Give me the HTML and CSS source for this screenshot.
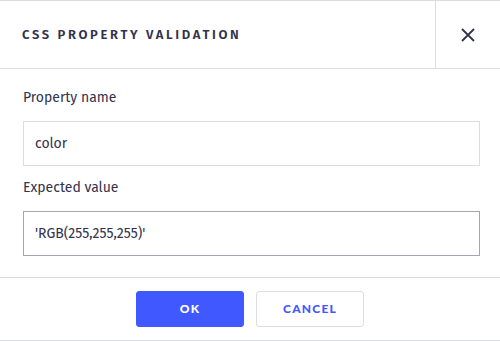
FILE: index.html
```html
<!DOCTYPE html>
<html>
<head>
<meta charset="utf-8">
<link rel="stylesheet" href="styles.css">
</head>
<body>
<div class="dialog">
  <div class="header">
    <div class="title">CSS PROPERTY VALIDATION</div>
    <button class="close" aria-label="Close">
      <svg width="16" height="16" viewBox="0 0 16 16"><path d="M2 2 L14 14 M14 2 L2 14" stroke="#32324d" stroke-width="1.8" fill="none"/></svg>
    </button>
  </div>
  <div class="body">
    <label class="label">Property name</label>
    <div class="input">color</div>
    <label class="label second">Expected value</label>
    <div class="input focused">'RGB(255,255,255)'</div>
  </div>
  <div class="footer">
    <button class="btn primary">OK</button>
    <button class="btn secondary">CANCEL</button>
  </div>
</div>
</body>
</html>
```
FILE: styles.css
```css
* { box-sizing: border-box; }
html, body { margin: 0; padding: 0; background: #fff; }
body { font-family: "Fira Sans", Lato, "Open Sans", sans-serif; color: #32324d; }
.dialog { width: 500px; height: 341px; border-top: 1px solid #dcdce4; border-bottom: 1px solid #dcdce4; display: flex; flex-direction: column; }
.header { height: 68px; display: flex; border-bottom: 1px solid #dcdce4; }
.title { flex: 1; padding-left: 22px; display: flex; align-items: center; font-size: 13px; font-weight: 600; letter-spacing: 2.65px; color: #32324d; }
.close { width: 65px; border: 0; border-left: 1px solid #dcdce4; background: #fff; display: flex; align-items: center; justify-content: center; padding: 0; }
.body { flex: 1; padding: 20px 21px 0 23px; display: flex; flex-direction: column; }
.label { font-size: 14px; line-height: 17px; height: 17px; color: #32324d; }
.label.second { margin-top: 13px; }
.input { margin-top: 15px; height: 45px; width: 457px; border: 1px solid #dcdce4; padding: 0 11px; display: flex; align-items: center; font-size: 14px; color: #32324d; }
.input.focused { border-color: #a5a5ba; }
.footer { height: 63px; border-top: 1px solid #dcdce4; display: flex; justify-content: center; align-items: center; gap: 12px; padding-bottom: 1px; }
.btn { width: 108px; height: 36px; border-radius: 3px; font-family: Lato, "Open Sans", sans-serif; font-size: 12px; font-weight: 900; letter-spacing: 1.2px; cursor: pointer; }
.primary { background: #4058ff; border: 1px solid #4058ff; color: #fff; }
.secondary { background: #fff; border: 1px solid #dcdce4; color: #4058ff; }
```
